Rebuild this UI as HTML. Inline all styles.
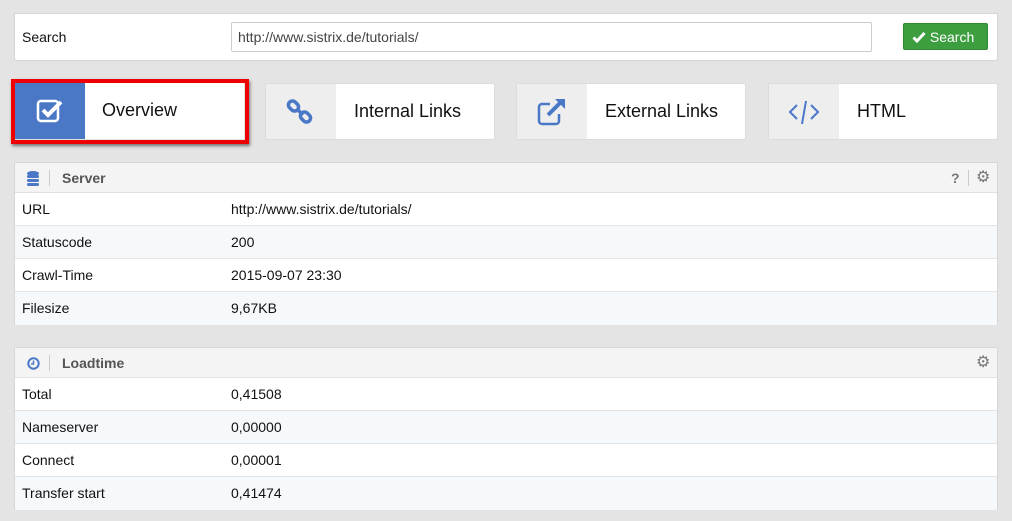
<!DOCTYPE html>
<html><head><style>
*{box-sizing:border-box;margin:0;padding:0}
body{width:1012px;height:521px;background:#e4e4e4;font-family:"Liberation Sans",sans-serif;font-size:14px;color:#111;position:relative;overflow:hidden}
.abs{position:absolute}
.panel{position:absolute;left:14px;width:984px;background:#fff;border:1px solid #d6d6d6;border-radius:2px}
.tab{position:absolute;top:83px;height:57px;width:230px;background:#fff;border:1px solid #dcdcdc;border-radius:2px}
.tab .ic{position:absolute;left:0;top:0;width:70px;height:55px;background:#eee;display:flex;align-items:center;justify-content:center}
.tab .lb{position:absolute;left:88px;top:17px;font-size:18px;color:#111}
.hd{height:30px;background:#f4f4f4;border-bottom:1px solid #e2e2e2;position:relative}
.hd .t{position:absolute;left:47px;top:7px;font-weight:bold;color:#555;font-size:14px}
.hd .sep{position:absolute;left:34px;top:7px;width:1px;height:16px;background:#ccc}
.row{height:33px;border-bottom:1px solid #e4e4e4;position:relative}
.row:last-child{border-bottom:none}
.row span{position:absolute;top:8px}
.row .k{left:7px}.row .v{left:216px}
</style></head><body>
<div class="panel" style="top:13px;height:48px">
<div class="abs" style="left:7px;top:15px">Search</div>
<div class="abs" style="left:216px;top:8px;width:641px;height:30px;border:1px solid #ccc;border-radius:2px;padding:6px 6px;color:#444">http://www.sistrix.de/tutorials/</div>
<div class="abs" style="left:888px;top:9px;width:85px;height:27px;background:#3d9e3f;border:1px solid #2f8a31;border-radius:2px;color:#fff;padding:5px 0 0 8px">
<svg width="14" height="12" viewBox="0 0 14 12" style="vertical-align:-1px"><path d="M1.5 6.5l3.5 3.5 7.5-8" stroke="#fff" stroke-width="3" fill="none"/></svg> Search</div>
</div>

<div class="abs" style="left:11px;top:79px;width:238px;height:65px;border:4px solid #e00;box-shadow:1px 2px 3px rgba(0,0,0,.5)"></div>
<div class="tab" style="left:15px;top:83px;width:229px;height:56px;border:none">
<div class="ic" style="background:#4a78c7;height:56px"><svg width="30" height="30" viewBox="0 0 30 30"><rect x="3" y="5" width="20" height="20" rx="3" fill="none" stroke="#fff" stroke-width="2.5"/><path d="M8 14l5 5 13-13" stroke="#fff" stroke-width="4" fill="none"/></svg></div>
<div class="lb" style="left:87px">Overview</div></div>

<div class="tab" style="left:265px"><div class="ic"><svg width="30" height="30" viewBox="0 0 30 30"><g fill="none" stroke="#4a78c7" stroke-width="3.5"><rect x="2" y="5" width="11" height="8" rx="4" transform="rotate(45 7.5 9)"/><rect x="14" y="16" width="11" height="8" rx="4" transform="rotate(45 19.5 20)"/><path d="M11 12l6 6"/></g></svg></div><div class="lb">Internal Links</div></div>
<div class="tab" style="left:516px"><div class="ic"><svg width="32" height="30" viewBox="0 0 32 30"><path d="M14 7H6a3 3 0 0 0-3 3v14a3 3 0 0 0 3 3h14a3 3 0 0 0 3-3v-7" fill="none" stroke="#4a78c7" stroke-width="2.5"/><path d="M12 18L25 5" stroke="#4a78c7" stroke-width="4"/><path d="M19 2h10v10z" fill="#4a78c7"/></svg></div><div class="lb">External Links</div></div>
<div class="tab" style="left:768px"><div class="ic"><svg width="34" height="30" viewBox="0 0 34 30"><path d="M10 8L3 15l7 7M24 8l7 7-7 7M19 4l-4 23" fill="none" stroke="#4a78c7" stroke-width="2"/></svg></div><div class="lb">HTML</div></div>

<div class="panel" style="top:162px;height:163px">
<div class="hd"><svg class="abs" style="left:12px;top:8px" width="12" height="15" viewBox="0 0 12 15"><g fill="#4a78c7"><ellipse cx="6" cy="2.5" rx="6" ry="2.5"/><rect x="0" y="4" width="12" height="3" rx="1.5"/><rect x="0" y="8" width="12" height="3" rx="1.5"/><rect x="0" y="12" width="12" height="3" rx="1.5"/></g></svg><div class="sep"></div><div class="t">Server</div>
<div class="abs" style="left:936px;top:7px;font-weight:bold;color:#777">?</div><div class="abs" style="left:953px;top:7px;width:1px;height:16px;background:#ccc"></div><div class="abs" style="left:961px;top:4px;color:#777;font-size:16px">⚙</div></div>
<div class="row" style="background:#fff"><span class="k">URL</span><span class="v">http://www.sistrix.de/tutorials/</span></div>
<div class="row" style="background:#f6f9fc"><span class="k">Statuscode</span><span class="v">200</span></div>
<div class="row" style="background:#fff"><span class="k">Crawl-Time</span><span class="v">2015-09-07 23:30</span></div>
<div class="row" style="background:#f6f9fc"><span class="k">Filesize</span><span class="v">9,67KB</span></div>
</div>

<div class="panel" style="top:347px;height:163px">
<div class="hd"><svg class="abs" style="left:12px;top:9px" width="13" height="13" viewBox="0 0 13 13"><circle cx="6.5" cy="6.5" r="5.2" fill="none" stroke="#4a78c7" stroke-width="2"/><path d="M6.5 3.5v3.5H4" fill="none" stroke="#4a78c7" stroke-width="1.5"/></svg><div class="sep"></div><div class="t">Loadtime</div>
<div class="abs" style="left:961px;top:4px;color:#777;font-size:16px">⚙</div></div>
<div class="row" style="background:#fff"><span class="k">Total</span><span class="v">0,41508</span></div>
<div class="row" style="background:#f6f9fc"><span class="k">Nameserver</span><span class="v">0,00000</span></div>
<div class="row" style="background:#fff"><span class="k">Connect</span><span class="v">0,00001</span></div>
<div class="row" style="background:#f6f9fc"><span class="k">Transfer start</span><span class="v">0,41474</span></div>
</div>
</body></html>
